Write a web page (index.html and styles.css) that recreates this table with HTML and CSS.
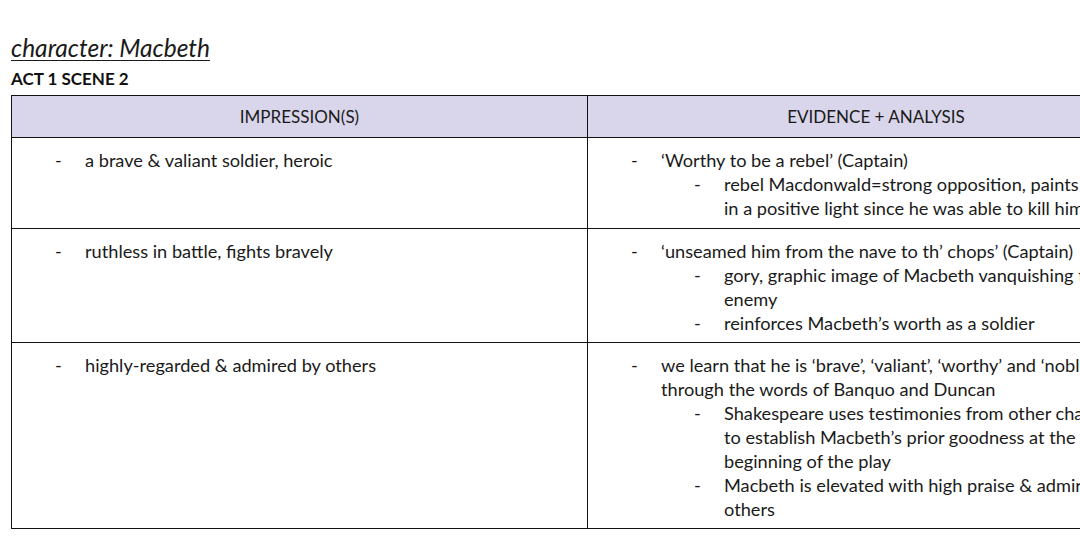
FILE: index.html
```html
<!DOCTYPE html>
<html>
<head>
<meta charset="utf-8">
<link rel="stylesheet" href="styles.css">
</head>
<body>
<div class="page">
  <h1 class="title">character: Macbeth</h1>
  <h2 class="scene">ACT 1 SCENE 2</h2>
  <table class="grid">
    <thead>
      <tr>
        <th class="col-imp">IMPRESSION(S)</th>
        <th class="col-ev">EVIDENCE + ANALYSIS</th>
      </tr>
    </thead>
    <tbody>
      <tr class="r1">
        <td><ul class="l1"><li>a brave &amp; valiant soldier, heroic</li></ul></td>
        <td>
          <ul class="l1">
            <li>‘Worthy to be a rebel’ (Captain)
              <ul class="l2">
                <li>rebel Macdonwald=strong opposition, paints Macbeth<br>in a positive light since he was able to kill him</li>
              </ul>
            </li>
          </ul>
        </td>
      </tr>
      <tr class="r2">
        <td><ul class="l1"><li>ruthless in battle, fights bravely</li></ul></td>
        <td>
          <ul class="l1">
            <li>‘unseamed him from the nave to th’ chops’ (Captain)
              <ul class="l2">
                <li>gory, graphic image of Macbeth vanquishing the<br>enemy</li>
                <li>reinforces Macbeth’s worth as a soldier</li>
              </ul>
            </li>
          </ul>
        </td>
      </tr>
      <tr class="r3">
        <td><ul class="l1"><li>highly-regarded &amp; admired by others</li></ul></td>
        <td>
          <ul class="l1">
            <li>we learn that he is ‘brave’, ‘valiant’, ‘worthy’ and ‘noble’<br>through the words of Banquo and Duncan
              <ul class="l2">
                <li>Shakespeare uses testimonies from other characters<br>to establish Macbeth’s prior goodness at the<br>beginning of the play</li>
                <li>Macbeth is elevated with high praise &amp; admiration from<br>others</li>
              </ul>
            </li>
          </ul>
        </td>
      </tr>
    </tbody>
  </table>
</div>
</body>
</html>
```

FILE: styles.css
```css
html, body {
  margin: 0;
  padding: 0;
  background: #ffffff;
  overflow: hidden;
}
body {
  font-family: "Lato", "Liberation Sans", sans-serif;
  color: #1a1a1a;
}
.page {
  padding: 34px 0 0 11px;
  width: 1200px;
}
.title {
  margin: 0;
  font-size: 24.5px;
  font-weight: 400;
  font-style: italic;
  text-decoration: underline;
  text-decoration-thickness: 1px;
  text-underline-offset: 3px;
  line-height: 28px;
  color: #1a1a1a;
}
.scene {
  margin: 7px 0 0 0;
  font-size: 17px;
  font-weight: 700;
  line-height: 20px;
  color: #111;
}
.grid {
  margin-top: 6px;
  border-collapse: collapse;
  width: 1154px;
  table-layout: fixed;
}
.grid th, .grid td {
  border: 1.5px solid #111;
  vertical-align: top;
}
.grid th {
  background: #d9d5ea;
  font-weight: 400;
  font-size: 17px;
  height: 41px;
  padding: 0;
  text-align: center;
  vertical-align: middle;
  color: #1a1a1a;
}
.col-imp { width: 575px; }
.grid td {
  padding: 10px 0 7px 0;
  font-size: 18.2px;
  line-height: 24px;
  white-space: nowrap;
}
.r1 td { height: 73px; }
.r2 td { height: 96px; }
.r3 td { height: 168px; }
ul {
  list-style: none;
  margin: 0;
  padding: 0;
}
.l1 > li {
  position: relative;
  padding-left: 73px;
}
.l1 > li::before {
  content: "-";
  position: absolute;
  left: 43px;
  top: 0;
}
.l2 > li {
  position: relative;
  padding-left: 63px;
}
.l2 > li::before {
  content: "-";
  position: absolute;
  left: 33px;
  top: 0;
}
```
